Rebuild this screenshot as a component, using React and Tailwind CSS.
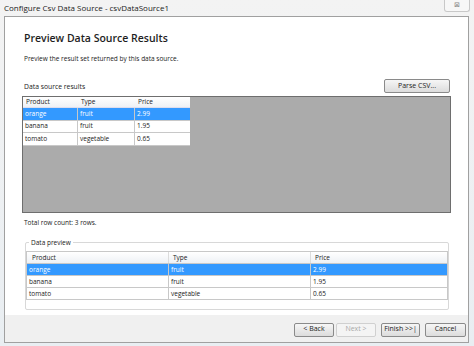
const rows = [
  { product: "orange", type: "fruit", price: "2.99" },
  { product: "banana", type: "fruit", price: "1.95" },
  { product: "tomato", type: "vegetable", price: "0.65" },
];

function Btn({ children, disabled, className = "" }) {
  return (
    <div
      className={`h-[14px] flex items-center justify-center border rounded-[2px] text-[7px] ${
        disabled
          ? "border-[#d0d0d0] bg-[#f4f4f4] text-[#a8a8a8]"
          : "border-[#8a8a8a] bg-gradient-to-b from-[#f6f6f6] to-[#dcdcdc] text-[#222]"
      } ${className}`}
    >
      {children}
    </div>
  );
}

export default function App() {
  return (
    <div
      className="w-[474px] h-[346px] bg-gradient-to-b from-[#f3f3f3] to-[#e9eef2] relative overflow-hidden text-[#1a1a1a]"
      style={{ fontFamily: '"Open Sans", "Noto Sans", sans-serif' }}
    >
      {/* title bar */}
      <div className="h-[16px] flex items-center pl-[4px] text-[8px] text-[#222]">
        Configure Csv Data Source - csvDataSource1
      </div>
      <div className="absolute right-[4px] top-0 w-[26px] h-[12px] border border-t-0 border-[#c8c8c8] rounded-b-[3px] bg-[#f7f7f7] flex items-center justify-center text-[7px] text-[#888]">
        ⊠
      </div>

      {/* client area */}
      <div className="absolute left-[4px] top-[16px] w-[465px] h-[327px] border border-[#a0a0a0] bg-white flex flex-col">
        <div className="flex-1 px-[19px] pt-[14px]">
          <div className="text-[10.5px] font-semibold text-[#1e1e1e] leading-[14px]">
            Preview Data Source Results
          </div>
          <div className="mt-[9px] text-[6.5px] leading-[9px]">
            Preview the result set returned by this data source.
          </div>

          <div className="mt-[16px] flex items-end justify-between -mr-[1px]">
            <div className="text-[6.8px] leading-[9px] mb-[2px]">Data source results</div>
            <Btn className="w-[66px] border-[#5c9ecf]">Parse CSV...</Btn>
          </div>

          <div className="mt-[3px] -mr-[2px] -ml-[2px] h-[117px] bg-[#ababab] border border-[#6e6e6e]">
            <div className="w-[167px] bg-white text-[6.5px] text-[#1a1a1a]">
              <div className="grid grid-cols-[55px_57px_55px] h-[11px] items-center bg-gradient-to-b from-white to-[#eef1f5] border-b border-[#dde]">
                <div className="pl-[3px]">Product</div>
                <div className="pl-[3px]">Type</div>
                <div className="pl-[3px]">Price</div>
              </div>
              {rows.map((r, i) => (
                <div
                  key={r.product}
                  className={`grid grid-cols-[55px_57px_55px] h-[12.5px] items-center border-b border-[#c8c8c8] ${
                    i === 0 ? "bg-[#3399ff] text-white" : "text-[#1a1a1a]"
                  }`}
                >
                  <div className="pl-[2px] h-full flex items-center border-r border-[#c8c8c8]">{r.product}</div>
                  <div className="pl-[2px] h-full flex items-center border-r border-[#c8c8c8]">{r.type}</div>
                  <div className="pl-[2px] h-full flex items-center">{r.price}</div>
                </div>
              ))}
            </div>
          </div>

          <div className="mt-[5px] text-[6.5px] leading-[9px]">Total row count: 3 rows.</div>

          <div className="relative mt-[15px] ml-[1px] mr-0 h-[68px] border border-[#d8d8d8] rounded-[2px] pt-[8px]">
            <div className="absolute -top-[5px] left-[3px] bg-white px-[2px] text-[6.5px] leading-[9px]">
              Data preview
            </div>
            <div className="text-[6.5px] border border-[#c8c8c8] border-b-0">
              <div className="grid grid-cols-[141px_142px_1fr] h-[12px] items-center bg-gradient-to-b from-white to-[#eef1f5] border-b border-[#c8c8c8]">
                <div className="pl-[5px]">Product</div>
                <div className="pl-[4px] h-full flex items-center border-l border-[#dcdcdc]">Type</div>
                <div className="pl-[4px] h-full flex items-center border-l border-[#dcdcdc]">Price</div>
              </div>
              {rows.map((r, i) => (
                <div
                  key={r.product}
                  className={`grid grid-cols-[141px_142px_1fr] h-[12px] items-center border-b border-[#c8c8c8] ${
                    i === 0 ? "bg-[#3399ff] text-white" : ""
                  }`}
                >
                  <div className="pl-[2px]">{r.product}</div>
                  <div className="pl-[2px] h-full flex items-center border-l border-[#c8c8c8]">{r.type}</div>
                  <div className="pl-[2px] h-full flex items-center border-l border-[#c8c8c8]">{r.price}</div>
                </div>
              ))}
            </div>
          </div>
        </div>

        {/* footer */}
        <div className="h-[27px] bg-[#f0f0f0] flex items-center justify-end gap-[2px] pr-[2px] pt-[2px]">
          <Btn className="w-[40px]">&lt; Back</Btn>
          <Btn disabled className="w-[40px]">Next &gt;</Btn>
          <Btn className="w-[39px] ml-[3px]">Finish &gt;&gt;|</Btn>
          <Btn className="w-[41px] ml-[3px]">Cancel</Btn>
        </div>
      </div>
    </div>
  );
}
